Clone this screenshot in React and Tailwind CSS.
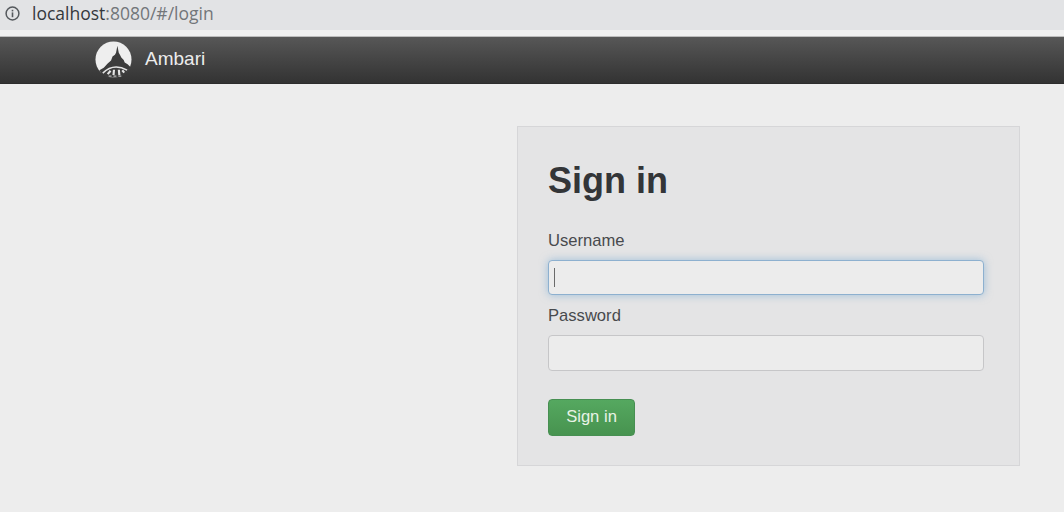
// App.jsx
// Ambari login page, seen through the browser address bar.

import React from 'react';

const AmbariLogo = () => (
  <svg width="37" height="37" viewBox="0 0 38 38" className="mb-[1px] shrink-0">
    <circle cx="19" cy="19" r="18.5" fill="#eeeeee" />
    {/* spire and roof */}
    <path d="M23 5 L24.4 12 L25.6 14 L27 17 L29.5 19.5 L30.5 22 L33.5 24 L36.6 27 L32 33 L26 37.5 L12 37.5 L7 34 L4.5 30 L9 27.5 L13 23 L16.5 20 L18 16 L20.5 14 L21.6 12 Z" fill="#3c3c3c" />
    {/* dome details */}
    <path d="M8 33 Q19 22 33 30" fill="none" stroke="#e4e4e4" strokeWidth="1.5" />
    <path d="M13 34 L16 30.5 M19 35 L19.5 29.5 M25 35 L24.5 29.5 M30 32.5 L28 30" fill="none" stroke="#e4e4e4" strokeWidth="2.2" />
    <path d="M14 36 H28" fill="none" stroke="#b8b8b8" strokeWidth="1.3" strokeDasharray="3 2" />
  </svg>
);

const InfoIcon = () => (
  <svg width="15" height="15" viewBox="0 0 15 15" className="shrink-0">
    <circle cx="7.5" cy="7.5" r="6.4" fill="none" stroke="#55595d" strokeWidth="1.5" />
    <rect x="6.7" y="3.8" width="1.6" height="1.6" fill="#55595d" />
    <rect x="6.7" y="6.4" width="1.6" height="4.8" fill="#55595d" />
  </svg>
);

const App = () => {
  return (
    <div className="h-[512px] w-[1064px] overflow-hidden bg-[#ededed] font-['Liberation_Sans',Arial,sans-serif]">
      <div className="flex h-[30px] items-center gap-[12px] bg-[#e2e3e5] pl-[5px] pb-[3px] font-['Open_Sans',sans-serif] text-[17.5px]">
        <InfoIcon />
        <div className="leading-none">
          <span className="text-[#34383c]">localhost</span>
          <span className="text-[#72767a]">:8080/#/login</span>
        </div>
      </div>
      <div className="h-[7px] border-b border-[#bcbcbc] bg-[#f0f0f0]" />

      <div className="flex h-[47px] items-center gap-[13px] border-b border-[#2d2d2d] bg-gradient-to-b from-[#575757] to-[#333333] pl-[95px]">
        <AmbariLogo />
        <span className="mb-[2px] text-[19px] text-[#ececec]">Ambari</span>
      </div>

      <div className="flex justify-end pt-[42px] pr-[44px]">
        <div className="h-[340px] w-[503px] border border-[#d6d6d8] bg-[#e4e4e5] px-[30px] pt-[32px]">
          <h1 className="text-[36px] leading-[44px] font-bold text-[#333538]">Sign in</h1>

          <label className="mt-[27px] block text-[16.6px] leading-[22px] text-[#484a4d]">Username</label>
          <div className="mt-[8px] flex h-[35px] w-[436px] items-center rounded-[4px] border border-[#8db0cf] bg-[#ececec] pl-[5px] shadow-[0_0_8px_rgba(110,165,210,0.6)]">
            <div className="h-[19px] w-px bg-[#6a6a6a]" />
          </div>

          <label className="mt-[10px] block text-[16.6px] leading-[22px] text-[#484a4d]">Password</label>
          <div className="mt-[8px] h-[36px] w-[436px] rounded-[4px] border border-[#c6c6c8] bg-[#ececec]" />

          <button className="mt-[28px] block h-[37px] w-[87px] rounded-[4px] border border-[#478f52] bg-gradient-to-b from-[#55a860] to-[#47934f] text-[16.6px] text-[#e8f3e6]">
            Sign in
          </button>
        </div>
      </div>
    </div>
  );
};

export default App;
